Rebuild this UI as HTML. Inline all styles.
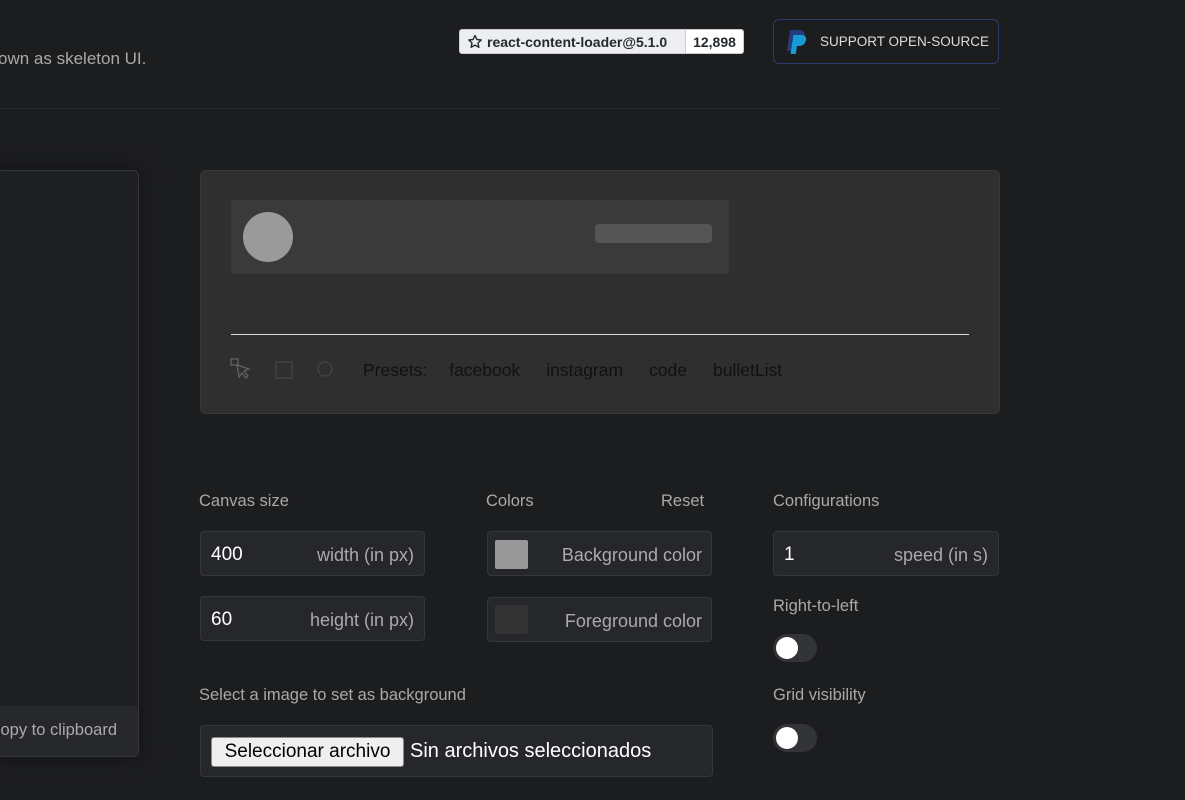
<!DOCTYPE html>
<html><head><style>
*{box-sizing:border-box;margin:0;padding:0}
body{width:1185px;height:800px;overflow:hidden;background:#1c1d1f;font-family:"Liberation Sans",sans-serif;color:#aaa;position:relative}
.a{position:absolute}
.inp{position:absolute;background:#26272a;border:1px solid #35363a;border-radius:4px}
.lbl{position:absolute;font-size:16.5px;color:#a9a9a9}
.tog{position:absolute;width:44px;height:28px;border-radius:14px;background:#333437}
.tog:after{content:"";position:absolute;left:3px;top:3px;width:22px;height:22px;border-radius:50%;background:#fff}
</style></head><body>
<div class="lbl" style="left:-2px;top:49px;font-size:17px">own as skeleton UI.</div>
<div class="a" style="left:0;top:108px;width:1000px;height:1px;background:#2a2b2e"></div>

<div class="a" style="left:459px;top:29px;width:285px;height:25px;border:1px solid #ccc;border-radius:3px;background:#eceef1;display:flex;font-size:14px;font-weight:bold;color:#24292e;overflow:hidden">
<div style="display:flex;align-items:center;padding-left:7px;width:225px;gap:4px"><svg width="16" height="16" viewBox="0 0 16 16"><path d="M8 1.5l1.9 4 4.3.5-3.2 3 .9 4.3L8 11.1 4.1 13.3 5 9 1.8 6l4.3-.5z" fill="none" stroke="#24292e" stroke-width="1.4" stroke-linejoin="round"/></svg>react-content-loader@5.1.0</div>
<div style="flex:1;background:#fff;border-left:1px solid #ccc;display:flex;align-items:center;justify-content:center">12,898</div></div>

<div class="a" style="left:773px;top:19px;width:226px;height:45px;border:1px solid #2d3b6e;border-radius:6px;display:flex;align-items:center;font-size:13.5px;color:#ddd">
<svg style="margin:0 12px 0 12px" width="22" height="26" viewBox="0 0 22 26"><path d="M4 1h9c4 0 6 2 5.5 5.5C18 11 15 13 11 13H8.5L7 22H1z" fill="#253b80"/><path d="M7.5 6h8c3.5 0 5 2 4.5 5-.6 4-3.5 6-7 6H11l-1.3 8H4.5z" fill="#179bd7"/></svg>SUPPORT OPEN-SOURCE</div>

<div class="a" style="left:-10px;top:170px;width:149px;height:587px;background:#1e1f21;border:1px solid #36373a;border-radius:6px;overflow:hidden;box-shadow:0 0 20px rgba(0,0,0,.4)">
<div class="a" style="left:0;bottom:0;width:100%;height:50px;background:#27282b;font-size:16.5px;color:#aaa;padding:15px 0 0 0;text-align:right;padding-right:21px;white-space:nowrap">opy to clipboard</div></div>

<div class="a" style="left:200px;top:170px;width:800px;height:244px;background:#2f2f2f;border:1px solid #3a3a3a;border-radius:6px"></div>
<div class="a" style="left:231px;top:200px;width:498px;height:74px;background:#3a3a3a"></div>
<div class="a" style="left:243px;top:212px;width:50px;height:50px;border-radius:50%;background:#9a9a9a"></div>
<div class="a" style="left:595px;top:224px;width:117px;height:19px;border-radius:4px;background:#555"></div>
<div class="a" style="left:231px;top:334px;width:738px;height:1px;background:#ddd"></div>
<svg class="a" style="left:229px;top:356px" width="120" height="26" viewBox="0 0 120 26"><path d="M2 3h7v6H2z M8 9l12 4-5 2 4 5-2 2-4-5-3 4z" fill="none" stroke="#666" stroke-width="1.2"/><rect x="47" y="6" width="16" height="16" fill="none" stroke="#444" stroke-width="1.3"/><circle cx="96" cy="13" r="7" fill="none" stroke="#444" stroke-width="1.3"/></svg>
<div class="a" style="left:363px;top:360px;font-size:17.5px;color:#111;white-space:nowrap">Presets:<span style="margin-left:22px">facebook</span><span style="margin-left:26px">instagram</span><span style="margin-left:26px">code</span><span style="margin-left:26px">bulletList</span></div>

<div class="lbl" style="left:199px;top:492px">Canvas size</div>
<div class="lbl" style="left:486px;top:492px">Colors</div>
<div class="lbl" style="left:661px;top:492px">Reset</div>
<div class="lbl" style="left:773px;top:492px">Configurations</div>

<div class="inp" style="left:200px;top:531px;width:225px;height:45px"><span class="a" style="left:10px;top:12px;font-size:19px;color:#fff">400</span><span class="a" style="right:10px;top:13px;font-size:18px;color:#aaa">width (in px)</span></div>
<div class="inp" style="left:200px;top:596px;width:225px;height:45px"><span class="a" style="left:10px;top:12px;font-size:19px;color:#fff">60</span><span class="a" style="right:10px;top:13px;font-size:18px;color:#aaa">height (in px)</span></div>
<div class="inp" style="left:487px;top:531px;width:225px;height:45px"><span class="a" style="left:7px;top:8px;width:33px;height:29px;border-radius:2px;background:#999"></span><span class="a" style="right:9px;top:13px;font-size:18px;color:#aaa;white-space:nowrap">Background color</span></div>
<div class="inp" style="left:487px;top:597px;width:225px;height:45px"><span class="a" style="left:7px;top:7px;width:33px;height:29px;border-radius:2px;background:#333"></span><span class="a" style="right:9px;top:13px;font-size:18px;color:#aaa;white-space:nowrap">Foreground color</span></div>
<div class="inp" style="left:773px;top:531px;width:226px;height:45px"><span class="a" style="left:10px;top:12px;font-size:19px;color:#fff">1</span><span class="a" style="right:10px;top:13px;font-size:18px;color:#aaa">speed (in s)</span></div>

<div class="lbl" style="left:773px;top:597px">Right-to-left</div>
<div class="tog" style="left:773px;top:634px"></div>
<div class="lbl" style="left:773px;top:686px">Grid visibility</div>
<div class="tog" style="left:773px;top:724px"></div>

<div class="lbl" style="left:199px;top:686px">Select a image to set as background</div>
<div class="inp" style="left:200px;top:725px;width:513px;height:52px"><span class="a" style="left:10px;top:11px;height:30px;width:193px;background:#efefef;border:1px solid #888;border-radius:3px;color:#000;font-size:19px;text-align:center;line-height:28px;white-space:nowrap">Seleccionar archivo</span><span class="a" style="left:209px;top:14px;font-size:20px;color:#fff;white-space:nowrap">Sin archivos seleccionados</span></div>
</body></html>
